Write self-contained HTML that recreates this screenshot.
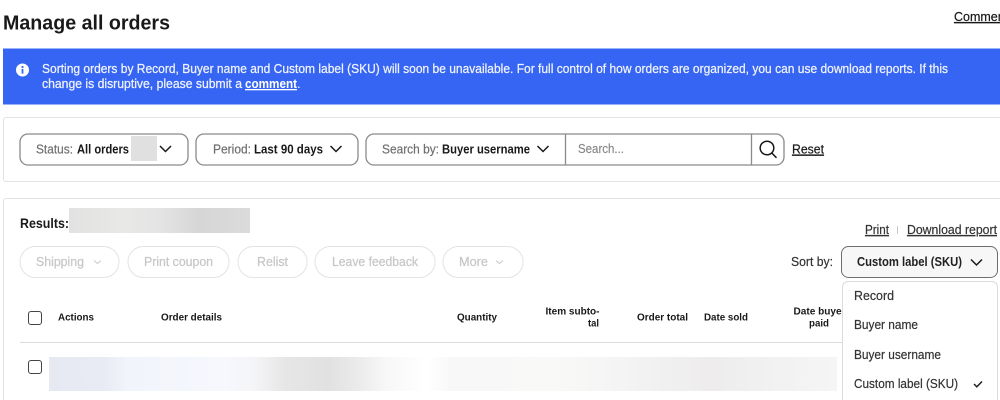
<!DOCTYPE html>
<html><head><meta charset="utf-8"><style>
html,body{margin:0;padding:0;background:#fff;width:1000px;height:400px;overflow:hidden}
svg{display:block}
text{font-family:"Liberation Sans",sans-serif;white-space:pre}
</style></head><body>
<svg width="1000" height="400" viewBox="0 0 1000 400" xmlns="http://www.w3.org/2000/svg">
<defs>
<linearGradient id="g1" x1="0" x2="1" y1="0" y2="0">
<stop offset="0" stop-color="#e2e2e2"/><stop offset=".3" stop-color="#e8e8e7"/><stop offset=".5" stop-color="#e4e4e4"/><stop offset=".72" stop-color="#d6d6d6"/><stop offset="1" stop-color="#dbdbdb"/>
</linearGradient>
<linearGradient id="g2" gradientUnits="userSpaceOnUse" x1="49" x2="837" y1="0" y2="0">
<stop offset="0" stop-color="#e6e9f2"/><stop offset=".07" stop-color="#e8ebf4"/><stop offset=".1" stop-color="#f2f4fb"/><stop offset=".22" stop-color="#f6f8fe"/><stop offset=".26" stop-color="#f5f5f7"/><stop offset=".3" stop-color="#e6e6e6"/><stop offset=".355" stop-color="#e1e1e1"/><stop offset=".395" stop-color="#ececec"/><stop offset=".43" stop-color="#f8f8f8"/><stop offset=".48" stop-color="#ffffff"/><stop offset=".51" stop-color="#f8f8f8"/><stop offset=".645" stop-color="#f9f9f8"/><stop offset=".74" stop-color="#f3f3f3"/><stop offset=".84" stop-color="#eeecec"/><stop offset=".91" stop-color="#f1f1f1"/><stop offset="1" stop-color="#f5f5f5"/>
</linearGradient>
</defs>
<rect width="1000" height="400" fill="#fff"/>

<text x="3" y="29.500" font-size="20" font-weight="700" fill="#191919" textLength="167" lengthAdjust="spacingAndGlyphs">Manage all orders</text>
<text x="954" y="21" font-size="12.500" fill="#191919" stroke="#191919" stroke-width=".2" text-decoration="underline">Comments</text>

<rect x="3" y="48.500" width="997" height="56" fill="#3665f3"/>
<circle cx="22.500" cy="70" r="6.500" fill="#fff"/>
<rect x="21.600" y="69" width="1.800" height="4.600" fill="#3665f3"/>
<circle cx="22.500" cy="67" r="1.100" fill="#3665f3"/>
<g stroke="#f0f3fe" stroke-width=".25">
<text x="42" y="73" font-size="13" fill="#f0f3fe" textLength="906" lengthAdjust="spacingAndGlyphs">Sorting orders by Record, Buyer name and Custom label (SKU) will soon be unavailable. For full control of how orders are organized, you can use download reports. If this</text>
<text x="42" y="88" font-size="13" fill="#f0f3fe" textLength="200" lengthAdjust="spacingAndGlyphs">change is disruptive, please submit a</text>
</g>
<text x="245" y="88" font-size="13" font-weight="700" fill="#fff" textLength="52" lengthAdjust="spacingAndGlyphs" text-decoration="underline">comment</text>
<text x="297" y="88" font-size="13" fill="#fff">.</text>

<path d="M1000 117.500H6a2.500 2.500 0 0 0-2.500 2.500v59a2.500 2.500 0 0 0 2.500 2.500h994" fill="none" stroke="#e3e3e3"/>

<rect x="20" y="134" width="168" height="31" rx="8" fill="#fff" stroke="#8a8a8a" stroke-width="1.300"/>
<text x="36" y="153.500" font-size="13" fill="#707070" stroke="#707070" stroke-width=".2" textLength="37" lengthAdjust="spacingAndGlyphs">Status:</text>
<text x="77" y="153.500" font-size="13" font-weight="700" fill="#191919" textLength="52" lengthAdjust="spacingAndGlyphs">All orders</text>
<rect x="131" y="136" width="26" height="25" fill="#e0e0e0"/>
<path d="M160 146l5.500 5.500 5.500-5.500" fill="none" stroke="#191919" stroke-width="1.500"/>

<rect x="196" y="134" width="162" height="31" rx="8" fill="#fff" stroke="#8a8a8a" stroke-width="1.300"/>
<text x="213" y="153.500" font-size="13" fill="#707070" stroke="#707070" stroke-width=".2" textLength="38" lengthAdjust="spacingAndGlyphs">Period:</text>
<text x="254" y="153.500" font-size="13" font-weight="700" fill="#191919" textLength="69" lengthAdjust="spacingAndGlyphs">Last 90 days</text>
<path d="M330.500 146l5.500 5.500 5.500-5.500" fill="none" stroke="#191919" stroke-width="1.500"/>

<rect x="366" y="134" width="418" height="31" rx="8" fill="#fff" stroke="#8a8a8a" stroke-width="1.300"/>
<line x1="565.500" y1="134" x2="565.500" y2="165" stroke="#8a8a8a" stroke-width="1.300"/>
<line x1="751.500" y1="134" x2="751.500" y2="165" stroke="#8a8a8a" stroke-width="1.300"/>
<text x="382" y="153.500" font-size="13" fill="#707070" stroke="#707070" stroke-width=".2" textLength="57" lengthAdjust="spacingAndGlyphs">Search by:</text>
<text x="442" y="153.500" font-size="13" font-weight="700" fill="#191919" textLength="88" lengthAdjust="spacingAndGlyphs">Buyer username</text>
<path d="M537.500 146l5.500 5.500 5.500-5.500" fill="none" stroke="#191919" stroke-width="1.500"/>
<text x="578" y="153" font-size="13" fill="#8a8a8a" stroke="#8a8a8a" stroke-width=".2" textLength="46" lengthAdjust="spacingAndGlyphs">Search...</text>
<circle cx="767" cy="148" r="6.800" fill="none" stroke="#191919" stroke-width="1.500"/>
<line x1="771.800" y1="153" x2="776.500" y2="157.800" stroke="#191919" stroke-width="1.500"/>
<text x="792" y="153.500" font-size="13" fill="#191919" stroke="#191919" stroke-width=".2" textLength="32" lengthAdjust="spacingAndGlyphs" text-decoration="underline">Reset</text>

<path d="M1000 198.500H6a2.500 2.500 0 0 0-2.500 2.500v199" fill="none" stroke="#e3e3e3"/>
<text x="20" y="228" font-size="14" font-weight="700" fill="#191919" textLength="49" lengthAdjust="spacingAndGlyphs">Results:</text>
<rect x="69" y="208" width="181" height="25" fill="url(#g1)"/>

<g fill="#fff" stroke="#e3e3e3">
<rect x="20" y="246.500" width="99" height="31" rx="15.500"/>
<rect x="128" y="246.500" width="101" height="31" rx="15.500"/>
<rect x="238" y="246.500" width="69" height="31" rx="15.500"/>
<rect x="315" y="246.500" width="120" height="31" rx="15.500"/>
<rect x="443" y="246.500" width="80" height="31" rx="15.500"/>
</g>
<g font-size="13" fill="#c7c7c7" stroke="#c7c7c7" stroke-width=".25">
<text x="36" y="266" textLength="48" lengthAdjust="spacingAndGlyphs">Shipping</text>
<text x="144" y="266" textLength="69" lengthAdjust="spacingAndGlyphs">Print coupon</text>
<text x="257" y="266" textLength="31" lengthAdjust="spacingAndGlyphs">Relist</text>
<text x="332" y="266" textLength="86" lengthAdjust="spacingAndGlyphs">Leave feedback</text>
<text x="459" y="266" textLength="29" lengthAdjust="spacingAndGlyphs">More</text>
</g>
<path d="M94 260.500l3.500 3 3.500-3M496 260.500l3.500 3 3.500-3" fill="none" stroke="#c7c7c7"/>

<rect x="28.500" y="311.500" width="13" height="13" rx="2.500" fill="#fff" stroke="#444" stroke-width="1"/>
<g font-size="10" font-weight="700" fill="#191919">
<text x="58" y="320.500" textLength="36" lengthAdjust="spacingAndGlyphs">Actions</text>
<text x="161" y="320.500" textLength="61" lengthAdjust="spacingAndGlyphs">Order details</text>
<text x="457" y="320.500" textLength="40" lengthAdjust="spacingAndGlyphs">Quantity</text>
<text x="545.500" y="314.500" textLength="54" lengthAdjust="spacingAndGlyphs">Item subto-</text>
<text x="588" y="326.500" textLength="11" lengthAdjust="spacingAndGlyphs">tal</text>
<text x="637" y="320.500" textLength="51" lengthAdjust="spacingAndGlyphs">Order total</text>
<text x="704" y="320.500" textLength="44" lengthAdjust="spacingAndGlyphs">Date sold</text>
<text x="793.500" y="314.500" textLength="52" lengthAdjust="spacingAndGlyphs">Date buyer</text>
<text x="809" y="326.500" textLength="20" lengthAdjust="spacingAndGlyphs">paid</text>
</g>
<line x1="20" y1="342.500" x2="842" y2="342.500" stroke="#dcdcdc"/>
<rect x="28.500" y="360.500" width="13" height="13" rx="2.500" fill="#fff" stroke="#444" stroke-width="1"/>
<rect x="49" y="357" width="788" height="34" fill="url(#g2)"/>

<g stroke="#333" stroke-width=".2">
<text x="865" y="234" font-size="12.500" fill="#333" textLength="24" lengthAdjust="spacingAndGlyphs" text-decoration="underline">Print</text>
<text x="907" y="234" font-size="12.500" fill="#333" textLength="90" lengthAdjust="spacingAndGlyphs" text-decoration="underline">Download report</text>
<text x="791" y="266" font-size="13" fill="#333" textLength="42" lengthAdjust="spacingAndGlyphs">Sort by:</text>
</g>
<line x1="897.500" y1="226" x2="897.500" y2="234" stroke="#c7c7c7"/>
<rect x="841.500" y="246.500" width="156" height="31" rx="7" fill="#f7f7f7" stroke="#6e6e6e"/>
<text x="857" y="266" font-size="13" font-weight="700" fill="#222" textLength="105" lengthAdjust="spacingAndGlyphs">Custom label (SKU)</text>
<path d="M971 259.500l5.500 5.500 5.500-5.500" fill="none" stroke="#191919" stroke-width="1.500"/>

<path d="M842.500 402V287a5.500 5.500 0 0 1 5.500-5.500h144a5.500 5.500 0 0 1 5.500 5.500v115z" fill="#fff" stroke="#dcdcdc"/>
<g font-size="13" fill="#333" stroke="#333" stroke-width=".2">
<text x="854" y="300" textLength="40" lengthAdjust="spacingAndGlyphs">Record</text>
<text x="854" y="329" textLength="64" lengthAdjust="spacingAndGlyphs">Buyer name</text>
<text x="854" y="359" textLength="87" lengthAdjust="spacingAndGlyphs">Buyer username</text>
<text x="854" y="388" textLength="104" lengthAdjust="spacingAndGlyphs">Custom label (SKU)</text>
</g>
<path d="M974 384l2.800 2.800 5.200-5.300" fill="none" stroke="#222" stroke-width="1.500"/>
</svg>
</body></html>
